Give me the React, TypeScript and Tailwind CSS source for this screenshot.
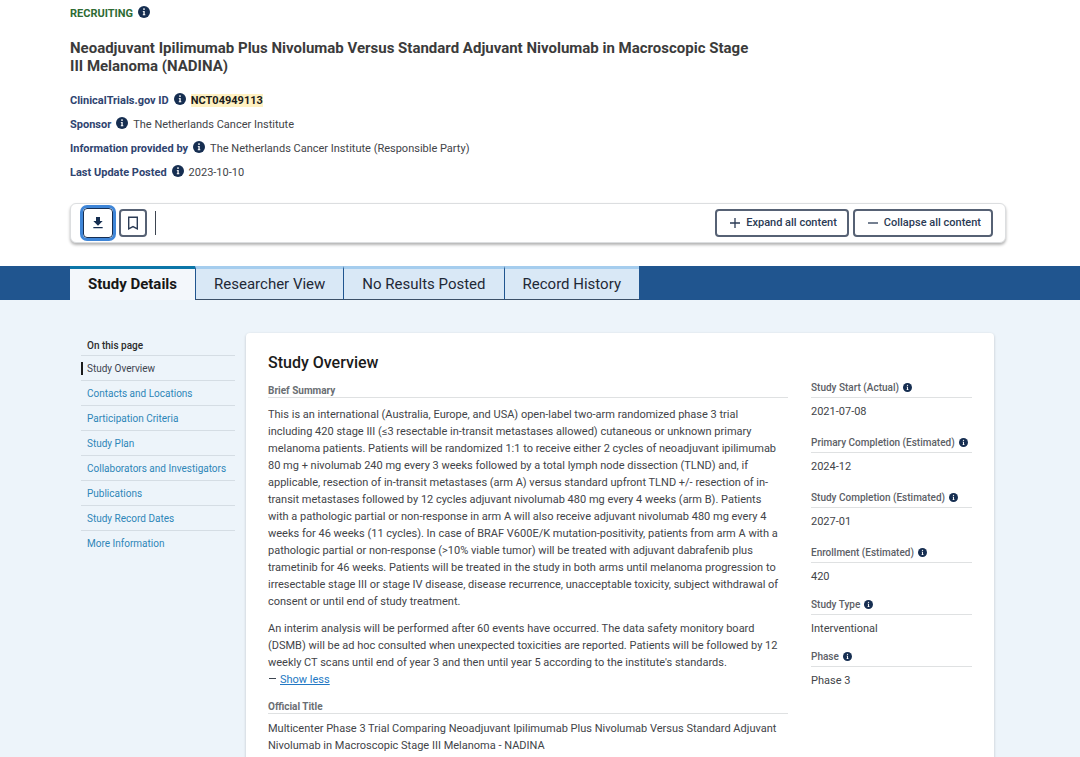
import React from "react"
import { MdDownload } from "react-icons/md"

const infoRows = [
    { label: "ClinicalTrials.gov ID", value: "NCT04949113", highlight: true },
    { label: "Sponsor", value: "The Netherlands Cancer Institute" },
    { label: "Information provided by", value: "The Netherlands Cancer Institute (Responsible Party)" },
    { label: "Last Update Posted", value: "2023-10-10" },
]

const tabs = ["Study Details", "Researcher View", "No Results Posted", "Record History"]

const sections = [
    "Study Overview",
    "Contacts and Locations",
    "Participation Criteria",
    "Study Plan",
    "Collaborators and Investigators",
    "Publications",
    "Study Record Dates",
    "More Information",
]

const facts = [
    { label: "Study Start (Actual)", value: "2021-07-08" },
    { label: "Primary Completion (Estimated)", value: "2024-12" },
    { label: "Study Completion (Estimated)", value: "2027-01" },
    { label: "Enrollment (Estimated)", value: "420", compact: true },
    { label: "Study Type", value: "Interventional", compact: true },
    { label: "Phase", value: "Phase 3", compact: true },
]

function InfoIcon({ className }: { className: string }) {
    return (
        <svg viewBox="0 0 12 12" className={`shrink-0 ${className}`} aria-hidden="true">
            <circle cx="6" cy="6" r="6" fill="#162e51" />
            <circle cx="6" cy="3.1" r="0.9" fill="#fff" />
            <path d="M4.8 4.9h1.9v3.4h.6v.9H4.8v-.9h.6V5.8h-.6z" fill="#fff" />
        </svg>
    )
}

function FieldHeading({ children }: { children: React.ReactNode }) {
    return (
        <h3 className="border-b border-[#dfe1e2] text-[10px] leading-[13px] font-bold text-[#6a6e73]">{children}</h3>
    )
}

export default function App() {
    return (
        <div className="flex min-h-screen flex-col bg-white font-[Roboto,'Liberation_Sans',sans-serif] text-[#424448]">
            <header className="mx-auto w-full max-w-[940px] pt-[5px]">
                <div className="flex items-center gap-[5px] text-[11px] leading-[18px] font-bold text-[#2e6b34]">
                    RECRUITING <InfoIcon className="mb-1 size-3" />
                </div>
                <h1 className="mt-4 max-w-[690px] text-[15px] leading-[18px] font-bold text-[#3b3b3b]">
                    Neoadjuvant Ipilimumab Plus Nivolumab Versus Standard Adjuvant Nivolumab in Macroscopic Stage III Melanoma (NADINA)
                </h1>
                <dl className="mt-[14px] text-[11px] leading-[24px]">
                    {infoRows.map(row => (
                        <div key={row.label} className="flex items-center gap-[5px]">
                            <dt className="flex items-center gap-[5px] font-bold text-[#2f4470]">
                                {row.label} <InfoIcon className="mb-1 size-3" />
                            </dt>
                            <dd>
                                {row.highlight
                                    ? <mark className="bg-[#fff1c2] font-bold text-[#1b1b1b]">{row.value}</mark>
                                    : row.value}
                            </dd>
                        </div>
                    ))}
                </dl>

                <div className="mt-[18px] mr-1 flex items-center rounded-md border border-[#dcdee0] bg-white py-1 pr-3 pl-3 shadow-[0_2px_3px_rgba(0,0,0,0.3)]">
                    <button aria-label="Download" className="mr-[6px] flex size-[30px] items-center justify-center rounded-sm border border-[#162e51] text-[#162e51] outline-3 outline-[#3f86d8]">
                        <MdDownload className="size-4" />
                    </button>
                    <button aria-label="Save this study" className="flex size-7 items-center justify-center rounded-sm border-2 border-[#566174] text-[#2b3b55]">
                        <svg viewBox="0 0 16 16" className="size-4" fill="none" stroke="currentColor" strokeWidth="1.4">
                            <path d="M3.7 2.2h8.6v11.6L8 11.6l-4.3 2.2z" />
                        </svg>
                    </button>
                    <span className="ml-2 h-6 w-px bg-[#3d4551]" />
                    <div className="ml-auto flex gap-1 text-[11px] font-medium text-[#2b3b55]">
                        <button className="flex h-7 items-center gap-[5px] rounded-sm border-2 border-[#566174] pr-[10px] pl-3">
                            <svg viewBox="0 0 12 12" className="size-3" stroke="currentColor" strokeWidth="1.3"><path d="M1 6h10M6 1v10" /></svg>
                            Expand all content
                        </button>
                        <button className="flex h-7 items-center gap-[5px] rounded-sm border-2 border-[#566174] pr-[10px] pl-3">
                            <svg viewBox="0 0 12 12" className="size-3" stroke="currentColor" strokeWidth="1.3"><path d="M1 6h10" /></svg>
                            Collapse all content
                        </button>
                    </div>
                </div>
            </header>

            <nav className="mt-[23px] bg-[#20558f]" aria-label="Study views">
                <div className="mx-auto flex w-full max-w-[940px]">
                    {tabs.map((tab, i) => (
                        <button
                            key={tab}
                            className={i === 0
                                ? "h-[34px] border-t-3 border-[#0b76a8] bg-[#f3f7fb] px-[18px] text-[15px] font-bold text-[#171717]"
                                : "h-[34px] border-t-3 border-b border-l border-t-[#a5cdee] border-b-[#3c5068] border-l-[#20558f] bg-[#d9e8f6] px-[18px] text-[15px] text-[#1f2937]"}
                        >
                            {tab}
                        </button>
                    ))}
                </div>
            </nav>

            <div className="flex flex-1 bg-[#edf4fa]">
                <div className="mx-auto flex w-full max-w-[940px] pt-[33px] pr-4 pl-[11px]">
                    <nav className="mt-[6px] w-[154px] shrink-0 text-[10px]" aria-label="On this page">
                        <h2 className="border-b border-[#d5dde4] pb-[2px] pl-[6px] leading-[14px] font-medium text-[#2b2b2b]">On this page</h2>
                        <ul>
                            {sections.map((name, i) => (
                                <li key={name} className="flex h-[25px] items-center border-b border-[#d5dde4] last:border-b-0">
                                    <a
                                        href="#overview"
                                        className={i === 0
                                            ? "border-l-2 border-[#1b1b1b] pl-1 leading-[13px] text-[#3d4551]"
                                            : "pl-[6px] text-[#2e86b8]"}
                                    >
                                        {name}
                                    </a>
                                </li>
                            ))}
                        </ul>
                    </nav>

                    <main id="overview" className="ml-[11px] flex min-w-0 flex-1 gap-[23px] rounded-t-sm bg-white px-[22px] pt-[21px] pb-6 shadow-[0_1px_3px_rgba(0,0,0,0.2)]">
                        <section className="min-w-0 flex-1 text-[11px] leading-[17px]">
                            <h2 className="mb-3 text-[16px] leading-[18px] font-medium text-[#1b1b1b]">Study Overview</h2>
                            <FieldHeading>Brief Summary</FieldHeading>
                            <p className="mt-2 pr-2">
                                This is an international (Australia, Europe, and USA) open-label two-arm randomized phase 3 trial including 420 stage III (≤3 resectable in-transit metastases allowed) cutaneous or unknown primary melanoma patients. Patients will be randomized 1:1 to receive either 2 cycles of neoadjuvant ipilimumab 80 mg + nivolumab 240 mg every 3 weeks followed by a total lymph node dissection (TLND) and, if applicable, resection of in-transit metastases (arm A) versus standard upfront TLND +/- resection of in-transit metastases followed by 12 cycles adjuvant nivolumab 480 mg every 4 weeks (arm B). Patients with a pathologic partial or non-response in arm A will also receive adjuvant nivolumab 480 mg every 4 weeks for 46 weeks (11 cycles). In case of BRAF V600E/K mutation-positivity, patients from arm A with a pathologic partial or non-response (&gt;10% viable tumor) will be treated with adjuvant dabrafenib plus trametinib for 46 weeks. Patients will be treated in the study in both arms until melanoma progression to irresectable stage III or stage IV disease, disease recurrence, unacceptable toxicity, subject withdrawal of consent or until end of study treatment.
                            </p>
                            <p className="mt-[10px] pr-2">
                                An interim analysis will be performed after 60 events have occurred. The data safety monitory board (DSMB) will be ad hoc consulted when unexpected toxicities are reported. Patients will be followed by 12 weekly CT scans until end of year 3 and then until year 5 according to the institute's standards.
                            </p>
                            <button className="flex gap-1 text-[#2378c3]">
                                <svg viewBox="0 0 8 8" className="mt-1 size-2" stroke="#3d4551" strokeWidth="1"><path d="M1 3.5h7" /></svg>
                                <span className="underline">Show less</span>
                            </button>
                            <div className="mt-3 mb-[6px]"><FieldHeading>Official Title</FieldHeading></div>
                            <p>Multicenter Phase 3 Trial Comparing Neoadjuvant Ipilimumab Plus Nivolumab Versus Standard Adjuvant Nivolumab in Macroscopic Stage III Melanoma - NADINA</p>
                        </section>

                        <dl className="mt-[27px] w-[161px] shrink-0">
                            {facts.map(fact => (
                                <div key={fact.label} className={fact.compact ? "h-[52px]" : "h-[55px]"}>
                                    <dt className="flex items-center gap-1 border-b border-[#dfe1e2] pb-[3px] text-[10px] leading-[13px] font-medium text-[#5c6066]">
                                        {fact.label} <InfoIcon className="size-[9px]" />
                                    </dt>
                                    <dd className="mt-[5px] text-[11px] leading-[17px]">{fact.value}</dd>
                                </div>
                            ))}
                        </dl>
                    </main>
                </div>
            </div>
        </div>
    )
}
